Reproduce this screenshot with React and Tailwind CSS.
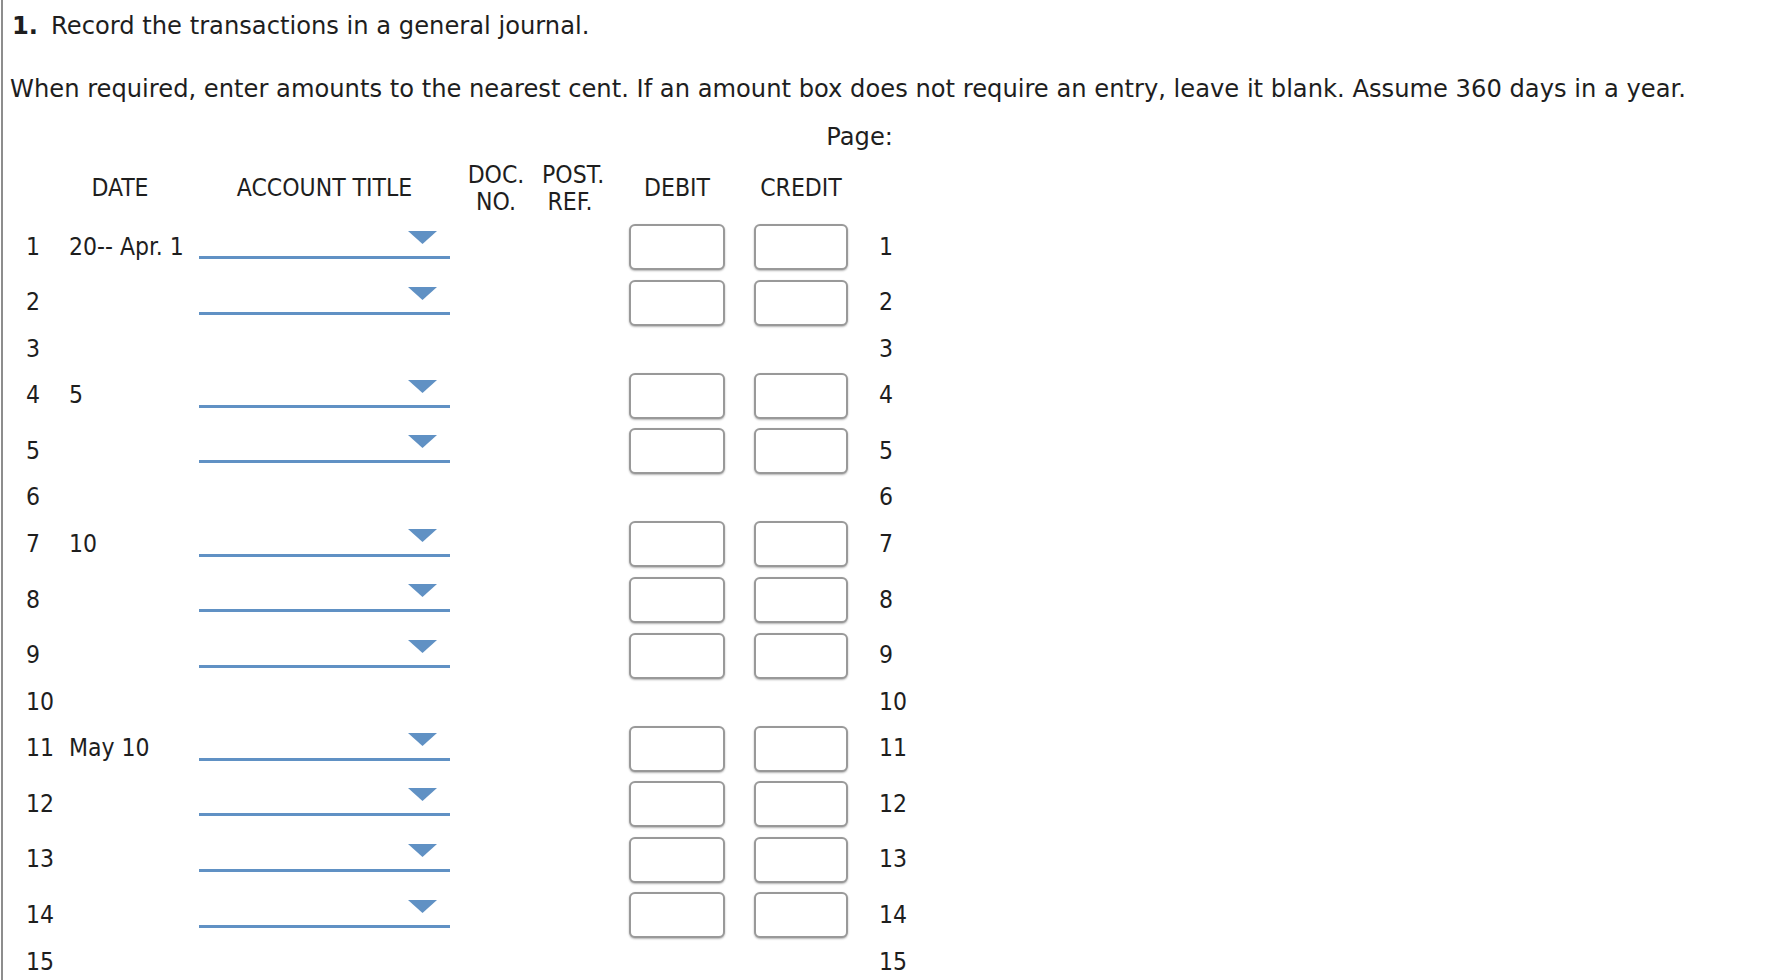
import React from "react";

const rows = [
  { n: 1, date: "20-- Apr. 1", entry: true },
  { n: 2, entry: true },
  { n: 3 },
  { n: 4, date: "5", entry: true },
  { n: 5, entry: true },
  { n: 6 },
  { n: 7, date: "10", entry: true },
  { n: 8, entry: true },
  { n: 9, entry: true },
  { n: 10 },
  { n: 11, date: "May 10", entry: true },
  { n: 12, entry: true },
  { n: 13, entry: true },
  { n: 14, entry: true },
  { n: 15 },
];

const AccountSelect = () => (
  <div className="self-start mt-[12px] h-[28px] w-[251px] border-b-[3.5px] border-[#6091c4] flex justify-end pr-[13px]">
    <svg width="29" height="13" viewBox="0 0 29 13">
      <polygon points="0,0 29,0 14.5,13" fill="#6091c4" />
    </svg>
  </div>
);

const AmountBox = () => (
  <div className="w-[96px] h-[46px] rounded-[6px] border-2 border-[#999] bg-white shadow-[0_1px_2px_rgba(0,0,0,0.3)]" />
);

const JournalRow = ({ row }) => (
  <div className={`flex items-center ${row.entry ? "h-[55.6px]" : "h-[37.5px]"}`}>
    <div className="w-[43px]">{row.n}</div>
    <div className="w-[130px]">{row.date}</div>
    <div className="w-[251px] h-full flex">{row.entry && <AccountSelect />}</div>
    <div className="w-[92px]" />
    <div className="w-[56px]" />
    <div className="w-[156px] pl-[2px] flex justify-center">{row.entry && <AmountBox />}</div>
    <div className="w-[94px] flex justify-center">{row.entry && <AmountBox />}</div>
    <div className="pl-[31px]">{row.n}</div>
  </div>
);

export default function App() {
  return (
    <div className="min-h-screen bg-white text-[#1e1e1e]">
      <div className="ml-[1px] min-h-screen border-l-2 border-[#8d8d8d] overflow-hidden" style={{ height: 980 }}>
        <div className="h-[51px] pt-[2px] flex items-center pl-[9px] text-[24.2px] font-['DejaVu_Sans',sans-serif]">
          <span className="font-bold mr-[13px]">1.</span>
          <span>Record the transactions in a general journal.</span>
        </div>
        <div className="h-[77px] flex items-center pl-[7px] text-[24.2px] font-['DejaVu_Sans',sans-serif] whitespace-nowrap">
          When required, enter amounts to the nearest cent. If an amount box does not require an entry, leave it blank. Assume 360 days in a year.
        </div>
        <div className="h-[18px] w-[890px] flex items-center justify-end text-[24.2px] leading-none font-['DejaVu_Sans',sans-serif]">
          Page:
        </div>
        <div className="pl-[23px] font-['DejaVu_Sans_Condensed','DejaVu_Sans',sans-serif] text-[24.5px]">
          <div className="h-[73.2px] pt-[10.8px] flex items-center leading-[27px]">
            <div className="w-[43px]" />
            <div className="w-[130px] text-center pr-[28px]">DATE</div>
            <div className="w-[251px] text-center">ACCOUNT TITLE</div>
            <div className="w-[92px] text-center">
              DOC.
              <br />
              NO.
            </div>
            <div className="w-[56px] text-center">
              POST.
              <br />
              REF.
            </div>
            <div className="w-[156px] pl-[2px] text-center">DEBIT</div>
            <div className="w-[94px] text-center">CREDIT</div>
          </div>
          {rows.map((row) => (
            <JournalRow key={row.n} row={row} />
          ))}
        </div>
      </div>
    </div>
  );
}
